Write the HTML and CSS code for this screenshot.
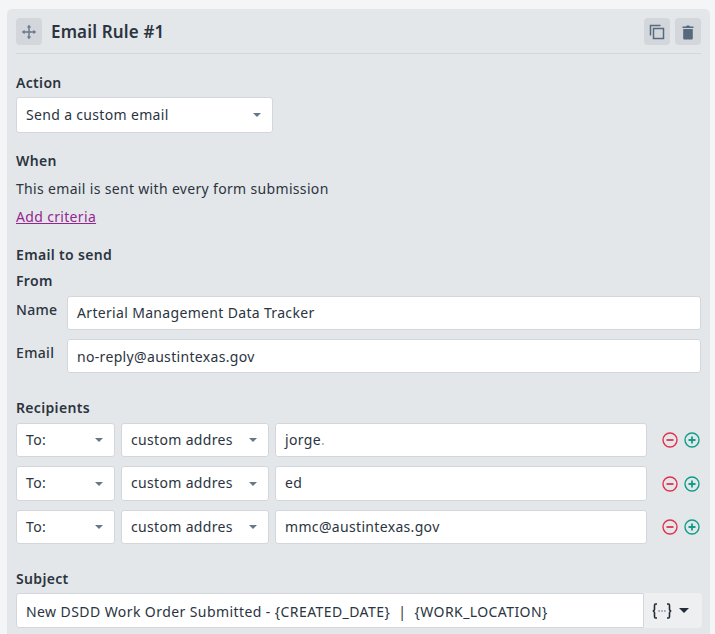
FILE: index.html
```html
<!DOCTYPE html>
<html lang="en">
<head>
  <meta charset="UTF-8">
  <title>Email Rule</title>
  <link rel="stylesheet" href="styles.css">
</head>
<body>
  <div class="rule-card">
    <div class="rule-header">
      <button class="icon-btn">
        <svg width="16" height="16" viewBox="0 0 16 16" fill="none" stroke="#64788c" stroke-width="1.4"><path d="M8 2v12M2 8h12"/><path d="M5.800 3.600 8 .8l2.200 2.800zM5.800 12.400 8 15.200l2.200-2.800zM3.600 5.800.8 8l2.800 2.200zM12.400 5.800 15.200 8l-2.800 2.200z" fill="#64788c" stroke="none"/></svg>
      </button>
      <h2 class="rule-title">Email Rule #1</h2>
      <div class="header-actions">
        <button class="icon-btn">
          <svg width="16" height="16" viewBox="0 0 16 16" fill="none" stroke="#56697d" stroke-width="1.5"><path d="M1.500 11.500V1.500h10"/><rect x="4.500" y="4.500" width="10" height="10"/></svg>
        </button>
        <button class="icon-btn">
          <svg width="16" height="16" viewBox="0 0 16 16" fill="#56697d"><path d="M2.500 2.500h3.500l.8-1h2.400l.8 1h3.500V4h-11zM3.200 5h9.600v9.200c0 .7-.5 1.300-1.200 1.300H4.400c-.7 0-1.200-.6-1.200-1.300z"/></svg>
        </button>
      </div>
    </div>

    <div class="field-label action-label">Action</div>
    <div class="select action-select">Send a custom email<span class="caret"></span></div>

    <div class="field-label when-label">When</div>
    <p class="when-text">This email is sent with every form submission</p>
    <a class="criteria-link" href="#">Add criteria</a>

    <div class="field-label send-label">Email to send</div>
    <div class="field-label from-label">From</div>
    <div class="from-row">
      <label class="name-label">Name</label>
      <div class="text-input">Arterial Management Data Tracker</div>
    </div>
    <div class="from-row">
      <label class="name-label">Email</label>
      <div class="text-input">no-reply@austintexas.gov</div>
    </div>

    <div class="field-label recipients-label">Recipients</div>
    <div class="recipient-row">
      <div class="select">To:<span class="caret"></span></div>
      <div class="select">custom addres<span class="caret"></span></div>
      <div class="text-input">jorge<span class="faint">.</span></div>
      <div class="row-actions">
        <svg width="16" height="16" viewBox="0 0 16 16" fill="none" stroke="#e0314f" stroke-width="1.4"><circle cx="8" cy="8" r="7"/><path d="M4.500 8h7" stroke-width="1.800"/></svg>
        <svg width="16" height="16" viewBox="0 0 16 16" fill="none" stroke="#0f9d8a" stroke-width="1.4"><circle cx="8" cy="8" r="7"/><path d="M4.500 8h7M8 4.500v7" stroke-width="1.800"/></svg>
      </div>
    </div>
    <div class="recipient-row">
      <div class="select">To:<span class="caret"></span></div>
      <div class="select">custom addres<span class="caret"></span></div>
      <div class="text-input">ed</div>
      <div class="row-actions">
        <svg width="16" height="16" viewBox="0 0 16 16" fill="none" stroke="#e0314f" stroke-width="1.4"><circle cx="8" cy="8" r="7"/><path d="M4.500 8h7" stroke-width="1.800"/></svg>
        <svg width="16" height="16" viewBox="0 0 16 16" fill="none" stroke="#0f9d8a" stroke-width="1.4"><circle cx="8" cy="8" r="7"/><path d="M4.500 8h7M8 4.500v7" stroke-width="1.800"/></svg>
      </div>
    </div>
    <div class="recipient-row">
      <div class="select">To:<span class="caret"></span></div>
      <div class="select">custom addres<span class="caret"></span></div>
      <div class="text-input">mmc@austintexas.gov</div>
      <div class="row-actions">
        <svg width="16" height="16" viewBox="0 0 16 16" fill="none" stroke="#e0314f" stroke-width="1.4"><circle cx="8" cy="8" r="7"/><path d="M4.500 8h7" stroke-width="1.800"/></svg>
        <svg width="16" height="16" viewBox="0 0 16 16" fill="none" stroke="#0f9d8a" stroke-width="1.4"><circle cx="8" cy="8" r="7"/><path d="M4.500 8h7M8 4.500v7" stroke-width="1.800"/></svg>
      </div>
    </div>

    <div class="field-label subject-label">Subject</div>
    <div class="subject-row">
      <div class="text-input subject-input">New DSDD Work Order Submitted - {CREATED_DATE} &nbsp;|&nbsp; {WORK_LOCATION}</div>
      <button class="vars-btn">
        <svg width="20" height="16" viewBox="0 0 20 16" fill="none" stroke="#232c38" stroke-width="1.6"><path d="M5 1H3.500C2.700 1 2.500 1.500 2.500 2.500V6c0 1-.6 2-1.800 2 1.200 0 1.800 1 1.800 2v3.500c0 1 .2 1.500 1 1.500H5M15 1h1.500c.8 0 1 .5 1 1.500V6c0 1 .6 2 1.800 2-1.200 0-1.800 1-1.800 2v3.500c0 1-.2 1.500-1 1.500H15"/><path d="M6.500 8h1.200M9.400 8h1.200M12.300 8h1.200" stroke-width="1.200"/></svg>
        <span class="caret dark"></span>
      </button>
    </div>
  </div>
</body>
</html>
```

FILE: styles.css
```css
html, body {
  height: 634px;
  overflow: hidden;
}
body {
  box-sizing: border-box;
  margin: 0;
  padding: 9px 5px 0 7px;
  background-color: #f4f5f7;
  font-family: "Noto Sans", "Open Sans", sans-serif;
  font-size: 14px;
  letter-spacing: 0.33px;
  color: #2b3440;
}
.rule-card {
  box-sizing: border-box;
  height: 625px;
  background-color: #e4e7ea;
  border-radius: 5px 5px 0 0;
  padding: 9px 9px 0 9px;
}
.rule-header {
  display: flex;
  align-items: center;
  gap: 9px;
  padding-bottom: 8px;
  border-bottom: 1px solid #d3d7dc;
}
.rule-title {
  margin: 0;
  font-size: 17px;
  line-height: 27px;
  font-weight: 600;
  letter-spacing: 0.15px;
  flex: 1;
}
.header-actions {
  display: flex;
  gap: 5px;
}
.icon-btn {
  width: 26px;
  height: 27px;
  padding: 0;
  border: none;
  border-radius: 4px;
  background-color: #d3d7dc;
  display: flex;
  align-items: center;
  justify-content: center;
}
.field-label {
  font-weight: 600;
  line-height: 20px;
}
.action-label { margin-top: 19px; }
.when-label { margin-top: 18px; }
.send-label { margin-top: 18px; }
.from-label { margin-top: 6px; }
.recipients-label { margin-top: 25px; }
.subject-label { margin-top: 25px; }
.select, .text-input {
  box-sizing: border-box;
  background-color: #fff;
  border: 1px solid #d3d7dc;
  border-radius: 3px;
  height: 34.33px;
  line-height: 32.33px;
  padding: 0 9px;
  white-space: nowrap;
  overflow: hidden;
}
.select {
  display: flex;
  justify-content: space-between;
  align-items: center;
}
.action-select {
  width: 257px;
  height: 36px;
  margin-top: 4px;
}
.caret {
  width: 0;
  height: 0;
  margin-right: 2px;
  border-left: 4px solid transparent;
  border-right: 4px solid transparent;
  border-top: 4px solid #64788c;
}
.caret.dark {
  margin: 0;
  border-left-width: 5px;
  border-right-width: 5px;
  border-top: 5px solid #232c38;
}
.when-text {
  margin: 8px 0 0;
  line-height: 20px;
}
.criteria-link {
  display: block;
  margin-top: 8px;
  line-height: 20px;
  color: #93278f;
}
.from-row {
  display: flex;
  align-items: center;
  gap: 8px;
  margin-bottom: 9px;
}
.from-label + .from-row {
  margin-top: 4.5px;
}
.from-row + .from-row .text-input {
  line-height: 34px;
}
.name-label {
  width: 43px;
  font-weight: 500;
  line-height: 20px;
  margin-bottom: 6px;
}
.from-row .text-input {
  flex: 1;
}
.recipient-row {
  display: grid;
  grid-template-columns: 99px 148px 372px 1fr;
  gap: 6px;
  margin-bottom: 9px;
}
.recipients-label + .recipient-row {
  margin-top: 5px;
}
.faint {
  color: #9aa5b1;
}
.row-actions {
  display: flex;
  align-items: center;
  gap: 6px;
  padding-left: 9px;
}
.subject-row {
  display: flex;
  margin-top: 4.3px;
  margin-right: -1px;
}
.subject-input {
  flex: 1;
  border-radius: 3px 0 0 3px;
  letter-spacing: 0.42px;
  line-height: 35px;
}
.vars-btn {
  width: 58px;
  height: 34.33px;
  border: none;
  border-radius: 0 4px 4px 0;
  background-color: #eeeff0;
  display: flex;
  align-items: center;
  gap: 7px;
  padding: 0 0 0 8px;
}
```
